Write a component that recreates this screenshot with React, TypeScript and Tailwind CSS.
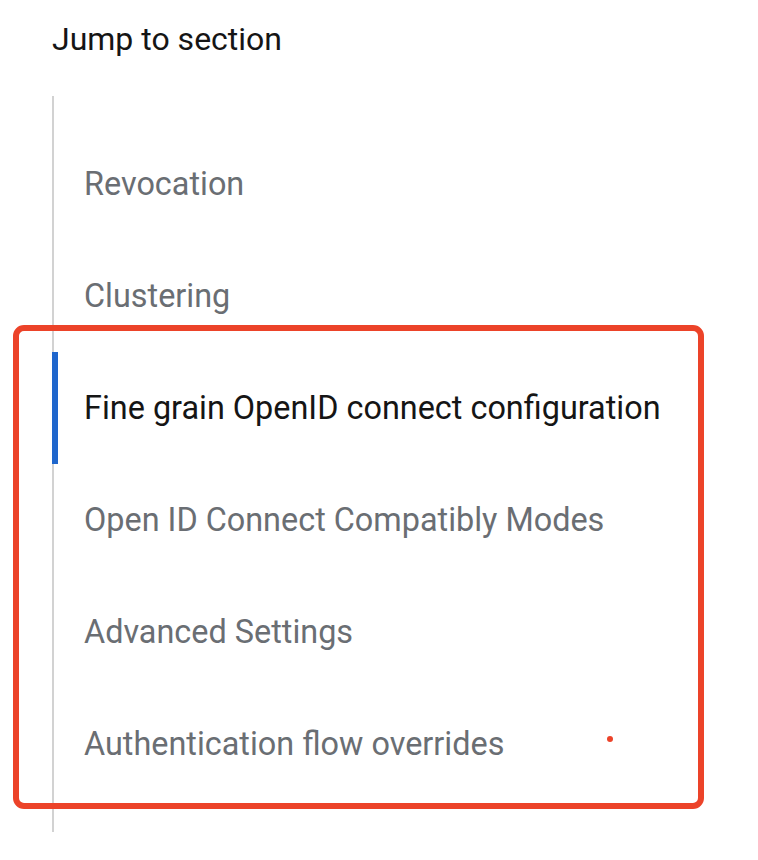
import React from "react";

const items = [
  { label: "Revocation", active: false },
  { label: "Clustering", active: false },
  { label: "Fine grain OpenID connect configuration", active: true },
  { label: "Open ID Connect Compatibly Modes", active: false },
  { label: "Advanced Settings", active: false },
  { label: "Authentication flow overrides", active: false },
];

export default function App() {
  return (
    <div
      className="relative w-[758px] h-[860px] bg-white"
      style={{ fontFamily: "Roboto, 'Liberation Sans', sans-serif" }}
    >
      <div className="pl-[52px] pt-[15px] text-[32px] leading-[48px] text-[#151515]">Jump to section</div>
      <nav className="ml-[52px] mt-[33px] border-l-2 border-[#d2d2d2] py-8">
        <ul>
          {items.map((it) => (
            <li key={it.label} className="relative flex h-[112px] items-center pl-[30px]">
              {it.active && <span className="absolute left-[-2px] top-0 h-full w-[6px] bg-[#1f66cc]" />}
              <span
                className={`text-[32.4px] leading-[48px] whitespace-nowrap ${
                  it.active ? "text-[#151515]" : "text-[#6a6e73]"
                }`}
              >
                {it.label}
              </span>
            </li>
          ))}
        </ul>
      </nav>
      <div className="absolute left-[13px] top-[325px] h-[484px] w-[691px] rounded-[11px] border-[6px] border-[#ec4329]" />
      <div className="absolute left-[607px] top-[736px] h-[6px] w-[6px] rounded-full bg-[#ec4329]" />
    </div>
  );
}
